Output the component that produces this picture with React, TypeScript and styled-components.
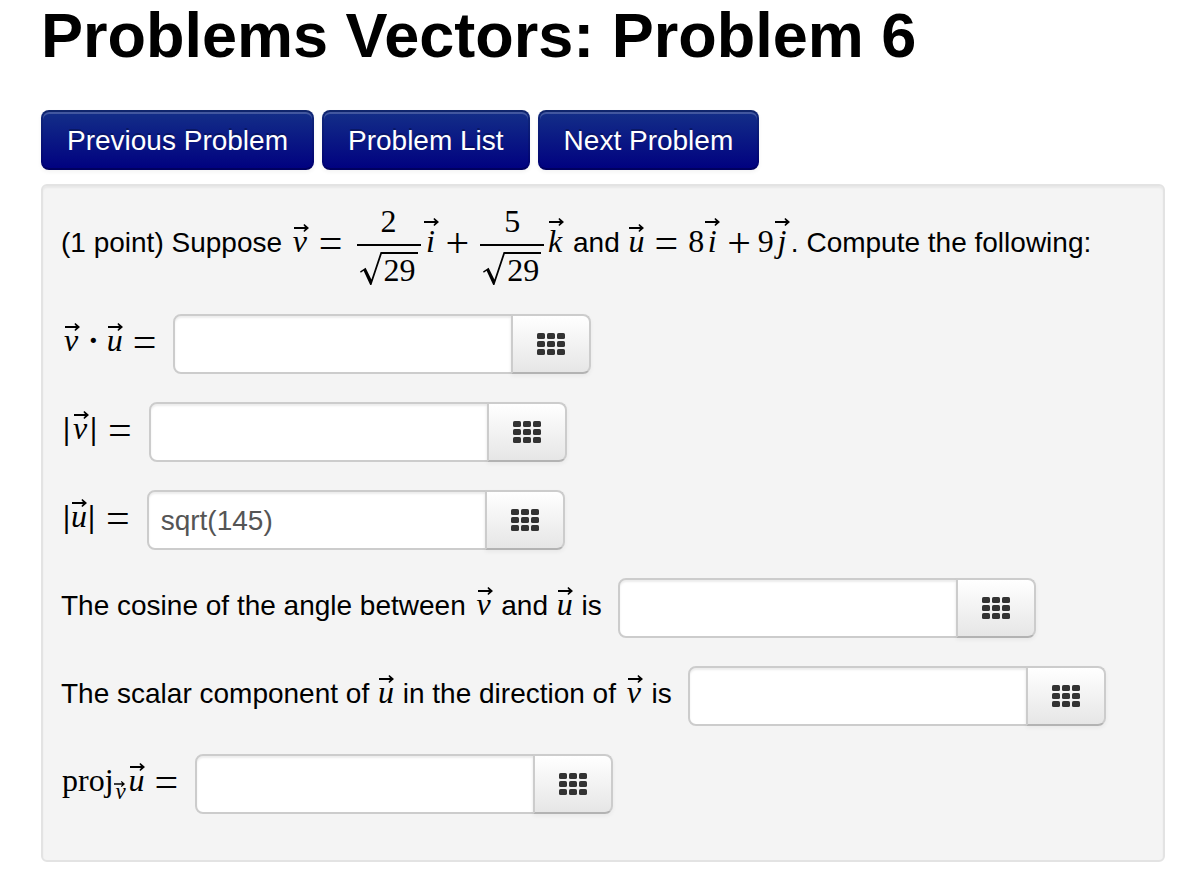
import React from "react";
import styled, { createGlobalStyle, css } from "styled-components";

const GlobalStyle = createGlobalStyle`
  *, *::before, *::after { box-sizing: border-box; }
  body {
    margin: 0;
    background: #fff;
    color: #000;
    font-family: "Liberation Sans", Arial, sans-serif;
    font-size: 28px;
    line-height: 40px;
  }
`;

const Page = styled.main`
  padding: 0 31px 18px 41px;
`;

const Title = styled.h1`
  margin: 0 0 40px;
  font-size: 63px;
  line-height: 70px;
  font-weight: 700;
`;

const ProblemNav = styled.nav`
  display: flex;
  flex-wrap: wrap;
  gap: 8px;
  margin-bottom: 14px;
`;

const NavButton = styled.button`
  height: 60px;
  padding: 2px 24px 0;
  border: 2px solid;
  border-color: rgba(0, 0, 0, 0.2) rgba(0, 0, 0, 0.1) rgba(0, 0, 0, 0.25);
  border-radius: 8px;
  background: linear-gradient(#143088, #000080) border-box;
  box-shadow: inset 0 2px 0 rgba(255, 255, 255, 0.2), 0 2px 4px rgba(0, 0, 0, 0.05);
  color: #fff;
  font: inherit;
  text-shadow: 0 -2px 0 rgba(0, 0, 0, 0.25);
  cursor: pointer;
`;

const Well = styled.form`
  padding: 18px 18px 46px;
  border: 2px solid #e3e3e3;
  border-radius: 6px;
  background: #f4f4f4;
  box-shadow: inset 0 2px 2px rgba(0, 0, 0, 0.05);
`;

const Statement = styled.p`
  margin: 0 0 28px;
`;

const Answers = styled.div`
  display: flex;
  flex-direction: column;
  gap: 28px;
`;

const AnswerRow = styled.div`
  display: flex;
  align-items: center;
  gap: 16px;
`;

const Prompt = styled.label`
  padding-bottom: 6px;
  white-space: nowrap;
`;

const InputGroup = styled.div`
  display: flex;
`;

const AnswerInput = styled.input`
  width: 340px;
  height: 60px;
  padding: 2px 12px 0;
  border: 2px solid #ccc;
  border-radius: 8px 0 0 8px;
  background: #fff;
  box-shadow: inset 0 2px 2px rgba(0, 0, 0, 0.075);
  color: #555;
  font: inherit;
  outline: none;
`;

const KeypadButton = styled.button`
  display: flex;
  align-items: center;
  justify-content: center;
  width: 80px;
  height: 60px;
  margin-left: -2px;
  padding: 0;
  border: 2px solid #ccc;
  border-bottom-color: #b3b3b3;
  border-radius: 0 8px 8px 0;
  background: linear-gradient(#fff, #e6e6e6);
  box-shadow: 0 2px 4px rgba(0, 0, 0, 0.05);
  cursor: pointer;
`;

const Math = styled.span`
  margin: 0 1px;
  font-family: "Liberation Serif", "Times New Roman", serif;
  font-size: 32px;
  white-space: nowrap;
`;

const Operator = styled.span<{ $kind: "rel" | "bin" }>`
  display: inline-block;
  margin: 0 ${(p) => (p.$kind === "rel" ? 10 : 7)}px;
  font-size: 42px;
  line-height: 32px;
  vertical-align: -5px;

  &:last-child {
    margin-right: 0;
  }
`;

const Dot = styled.span`
  margin: 0 8px;
  font-weight: 700;
`;

const Bar = styled.span`
  display: inline-block;
  width: 9px;
  font-weight: 700;
  text-align: center;
`;

const Symbol = styled.span<{ $width: number; $small?: boolean }>`
  position: relative;
  display: inline-block;
  min-width: ${(p) => p.$width}px;
  text-align: center;
  font-style: italic;
  ${(p) =>
    p.$small &&
    css`
      top: 8px;
      margin: 0 2px 0 1px;
      font-size: 23px;
      line-height: 24px;
    `}
`;

const Accent = styled.svg<{ $tall?: boolean; $small?: boolean }>`
  position: absolute;
  right: ${(p) => (p.$small ? 2 : 0)}px;
  bottom: ${(p) => (p.$small ? 17 : p.$tall ? 35 : 29)}px;
  overflow: visible;
`;

const Fraction = styled.span`
  display: inline-flex;
  flex-direction: column;
  width: 64px;
  margin: 0 2px 0 4px;
  vertical-align: middle;
  line-height: 34px;
  text-align: center;
`;

const Numerator = styled.span`
  padding-bottom: 6px;
  border-bottom: 2px solid #000;
`;

const Denominator = styled.span`
  display: flex;
  justify-content: center;
  padding-top: 6px;
`;

const Radicand = styled.span`
  padding: 0 2px;
  border-top: 2px solid #000;
  line-height: 32px;
`;

function Vec({ name, tall, small }: { name: string; tall?: boolean; small?: boolean }) {
  const width = small ? 12 : name === "v" || name === "k" ? 18 : 16;
  return (
    <Symbol $width={width} $small={small}>
      {name}
      <Accent
        $tall={tall}
        $small={small}
        width={small ? 11 : 15}
        height={small ? 6 : 8}
        viewBox="0 0 15 8"
        aria-hidden="true"
      >
        <path d="M0 3H11L9.4 1L10.4 0L15 4L10.4 8L9.4 7L11 5H0Z" fill="#000" />
      </Accent>
    </Symbol>
  );
}

function RootFraction({ top }: { top: string }) {
  return (
    <Fraction>
      <Numerator>{top}</Numerator>
      <Denominator>
        <svg width="22" height="33" viewBox="0 0 22 33" aria-hidden="true">
          <path
            d="M0 19.5L5.6 15.8L11.4 27.6L20.6 0H22V2H21.8L11.4 33H10.2L3.6 18.8L0.8 20.7Z"
            fill="#000"
          />
        </svg>
        <Radicand>29</Radicand>
      </Denominator>
    </Fraction>
  );
}

const Equals = () => <Operator $kind="rel">=</Operator>;
const Plus = () => <Operator $kind="bin">+</Operator>;

function KeypadIcon() {
  return (
    <svg width="28" height="22" viewBox="0 0 28 22" fill="#333" aria-hidden="true">
      {[0, 8, 16].map((y) =>
        [0, 10, 20].map((x) => <rect key={`${x}-${y}`} x={x} y={y} width="8" height="6" rx="1.6" />)
      )}
    </svg>
  );
}

function Answer({ id, value, children }: { id: string; value?: string; children: React.ReactNode }) {
  return (
    <AnswerRow>
      <Prompt htmlFor={id}>{children}</Prompt>
      <InputGroup>
        <AnswerInput id={id} type="text" defaultValue={value} />
        <KeypadButton type="button" aria-label="Open equation editor">
          <KeypadIcon />
        </KeypadButton>
      </InputGroup>
    </AnswerRow>
  );
}

export default function App() {
  return (
    <>
      <GlobalStyle />
      <Page>
        <Title>Problems Vectors: Problem 6</Title>
        <ProblemNav>
          <NavButton>Previous Problem</NavButton>
          <NavButton>Problem List</NavButton>
          <NavButton>Next Problem</NavButton>
        </ProblemNav>
        <Well>
          <Statement>
            (1 point) Suppose{" "}
            <Math>
              <Vec name="v" />
              <Equals />
              <RootFraction top="2" />
              <Vec name="i" tall />
              <Plus />
              <RootFraction top="5" />
              <Vec name="k" tall />
            </Math>{" "}
            and{" "}
            <Math>
              <Vec name="u" />
              <Equals />8<Vec name="i" tall />
              <Plus />9<Vec name="j" tall />
            </Math>
            . Compute the following:
          </Statement>
          <Answers>
            <Answer id="dot-product">
              <Math>
                <Vec name="v" />
                <Dot>·</Dot>
                <Vec name="u" />
                <Equals />
              </Math>
            </Answer>
            <Answer id="norm-v">
              <Math>
                <Bar>|</Bar>
                <Vec name="v" />
                <Bar>|</Bar>
                <Equals />
              </Math>
            </Answer>
            <Answer id="norm-u" value="sqrt(145)">
              <Math>
                <Bar>|</Bar>
                <Vec name="u" />
                <Bar>|</Bar>
                <Equals />
              </Math>
            </Answer>
            <Answer id="cosine">
              The cosine of the angle between{" "}
              <Math>
                <Vec name="v" />
              </Math>{" "}
              and{" "}
              <Math>
                <Vec name="u" />
              </Math>{" "}
              is
            </Answer>
            <Answer id="scalar-component">
              The scalar component of{" "}
              <Math>
                <Vec name="u" />
              </Math>{" "}
              in the direction of{" "}
              <Math>
                <Vec name="v" />
              </Math>{" "}
              is
            </Answer>
            <Answer id="projection">
              <Math>
                proj
                <Vec name="v" small />
                <Vec name="u" />
                <Equals />
              </Math>
            </Answer>
          </Answers>
        </Well>
      </Page>
    </>
  );
}
